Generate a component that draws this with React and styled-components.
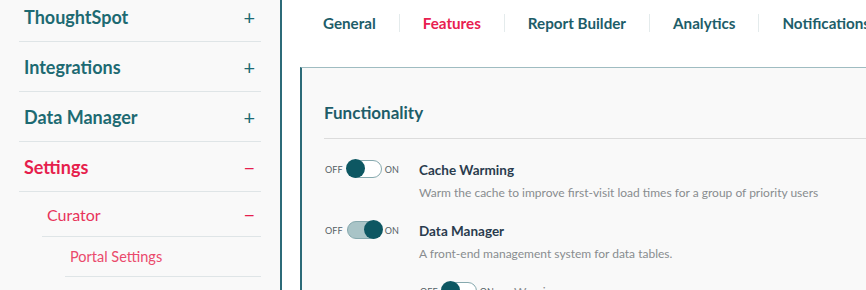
import React from "react";
import styled, { createGlobalStyle } from "styled-components";

const GlobalStyle = createGlobalStyle`
  html, body {
    margin: 0;
    padding: 0;
    background: #ffffff;
  }
  body {
    font-family: "Lato", "Open Sans", sans-serif;
    overflow: hidden;
  }
`;

const Page = styled.div`
  display: flex;
  width: 866px;
  height: 290px;
  overflow: hidden;
`;

const Sidebar = styled.aside`
  width: 282px;
  flex-shrink: 0;
  background: #f9f9f9;
  border-right: 2px solid #2c6b78;
  padding: 0 19px;
  box-sizing: border-box;
`;

const NavList = styled.ul`
  list-style: none;
  margin: ${(p) => (p.$nested ? "0 0 0 23px" : "-8px 0 0 0")};
  padding: 0;
`;

const NavItem = styled.li`
  display: flex;
  align-items: center;
  justify-content: space-between;
  height: ${(p) => p.$height}px;
  padding: 0 6px 0 5px;
  border-bottom: 1px solid #dfe5e7;
  font-size: ${(p) => p.$size}px;
  font-weight: ${(p) => p.$weight};
  color: ${(p) => p.$color};
`;

const Sign = styled.span`
  font-size: 20px;
  font-weight: 400;
  line-height: 1;
  color: ${(p) => p.$color};
`;

const Main = styled.main`
  flex: 1;
  padding-left: 18px;
  background: #ffffff;
  min-width: 0;
`;

const Tabs = styled.nav`
  display: flex;
  padding-top: 14px;
  white-space: nowrap;
`;

const Tab = styled.span`
  padding: 0 23px;
  height: 18px;
  line-height: 18px;
  font-size: 15.2px;
  font-weight: 700;
  color: ${(p) => (p.$active ? "#e8204f" : "#1d5d69")};
  border-left: ${(p) => (p.$first ? "none" : "1px solid #e4ebec")};
`;

const Panel = styled.section`
  margin-top: 35px;
  background: #f9f9f9;
  border-left: 2px solid #2c6b78;
  border-top: 1px solid #9fbcc1;
  padding: 0 0 0 22px;
  height: 260px;
  width: 800px;
`;

const Heading = styled.h2`
  margin: 0;
  padding-top: 34px;
  height: 36px;
  font-size: 17px;
  font-weight: 700;
  color: #1d5d69;
  border-bottom: 1px solid #dcdcdc;
`;

const Rows = styled.div`
  display: flex;
  flex-direction: column;
  gap: 20px;
  padding-top: 20px;
`;

const Row = styled.div`
  display: flex;
  gap: 20px;
  margin-left: ${(p) => p.$indent || 0}px;
`;

const ToggleGroup = styled.div`
  display: flex;
  align-items: center;
  gap: 3px;
  width: 74px;
  flex-shrink: 0;
  height: 20px;
  padding-left: 1px;
`;

const ToggleText = styled.span`
  font-size: 9px;
  color: #555f66;
  letter-spacing: 0.1px;
`;

const Track = styled.span`
  position: relative;
  display: inline-block;
  width: 36px;
  height: 18px;
  margin-left: 1px;
  box-sizing: border-box;
  border-radius: 9px;
  border: 1.5px solid #86a9ae;
  background: ${(p) => (p.$on ? "#a9c4c7" : "#ffffff")};
`;

const Knob = styled.span`
  position: absolute;
  top: -2px;
  left: ${(p) => (p.$on ? "16px" : "-2px")};
  width: 19px;
  height: 19px;
  border-radius: 50%;
  background: #0d5762;
`;

const Copy = styled.div`
  display: flex;
  flex-direction: column;
  gap: 7px;
  padding-top: 3px;
`;

const Title = styled.div`
  font-size: 13.5px;
  font-weight: 700;
  color: #2a3c4e;
`;

const Description = styled.div`
  font-size: 12px;
  color: #888c8f;
`;

const Toggle = ({ on }) => (
  <ToggleGroup>
    <ToggleText>OFF</ToggleText>
    <Track $on={on}>
      <Knob $on={on} />
    </Track>
    <ToggleText>ON</ToggleText>
  </ToggleGroup>
);

const teal = "#1d6a72";
const red = "#e61f4d";

export default function App() {
  return (
    <>
      <GlobalStyle />
      <Page>
        <Sidebar>
          <NavList>
            {["ThoughtSpot", "Integrations", "Data Manager"].map((label) => (
              <NavItem key={label} $height={49} $size={18} $weight={700} $color={teal}>
                {label}
                <Sign $color={teal}>+</Sign>
              </NavItem>
            ))}
            <NavItem $height={49} $size={18} $weight={700} $color={red}>
              Settings
              <Sign $color={red}>−</Sign>
            </NavItem>
            <li>
              <NavList $nested>
                <NavItem $height={44} $size={16} $weight={400} $color="#e8335a">
                  Curator
                  <Sign $color={red}>−</Sign>
                </NavItem>
                <li>
                  <NavList $nested>
                    <NavItem $height={39} $size={14.5} $weight={400} $color="#ea4a6c">
                      Portal Settings
                    </NavItem>
                  </NavList>
                </li>
              </NavList>
            </li>
          </NavList>
        </Sidebar>
        <Main>
          <Tabs>
            <Tab $first>General</Tab>
            <Tab $active>Features</Tab>
            <Tab>Report Builder</Tab>
            <Tab>Analytics</Tab>
            <Tab>Notifications</Tab>
          </Tabs>
          <Panel>
            <Heading>Functionality</Heading>
            <Rows>
              <Row>
                <Toggle on={false} />
                <Copy>
                  <Title>Cache Warming</Title>
                  <Description>
                    Warm the cache to improve first-visit load times for a group of priority users
                  </Description>
                </Copy>
              </Row>
              <Row>
                <Toggle on />
                <Copy>
                  <Title>Data Manager</Title>
                  <Description>A front-end management system for data tables.</Description>
                </Copy>
              </Row>
              <Row $indent={95}>
                <Toggle on={false} />
                <Copy>
                  <Description>Warnings</Description>
                </Copy>
              </Row>
            </Rows>
          </Panel>
        </Main>
      </Page>
    </>
  );
}
